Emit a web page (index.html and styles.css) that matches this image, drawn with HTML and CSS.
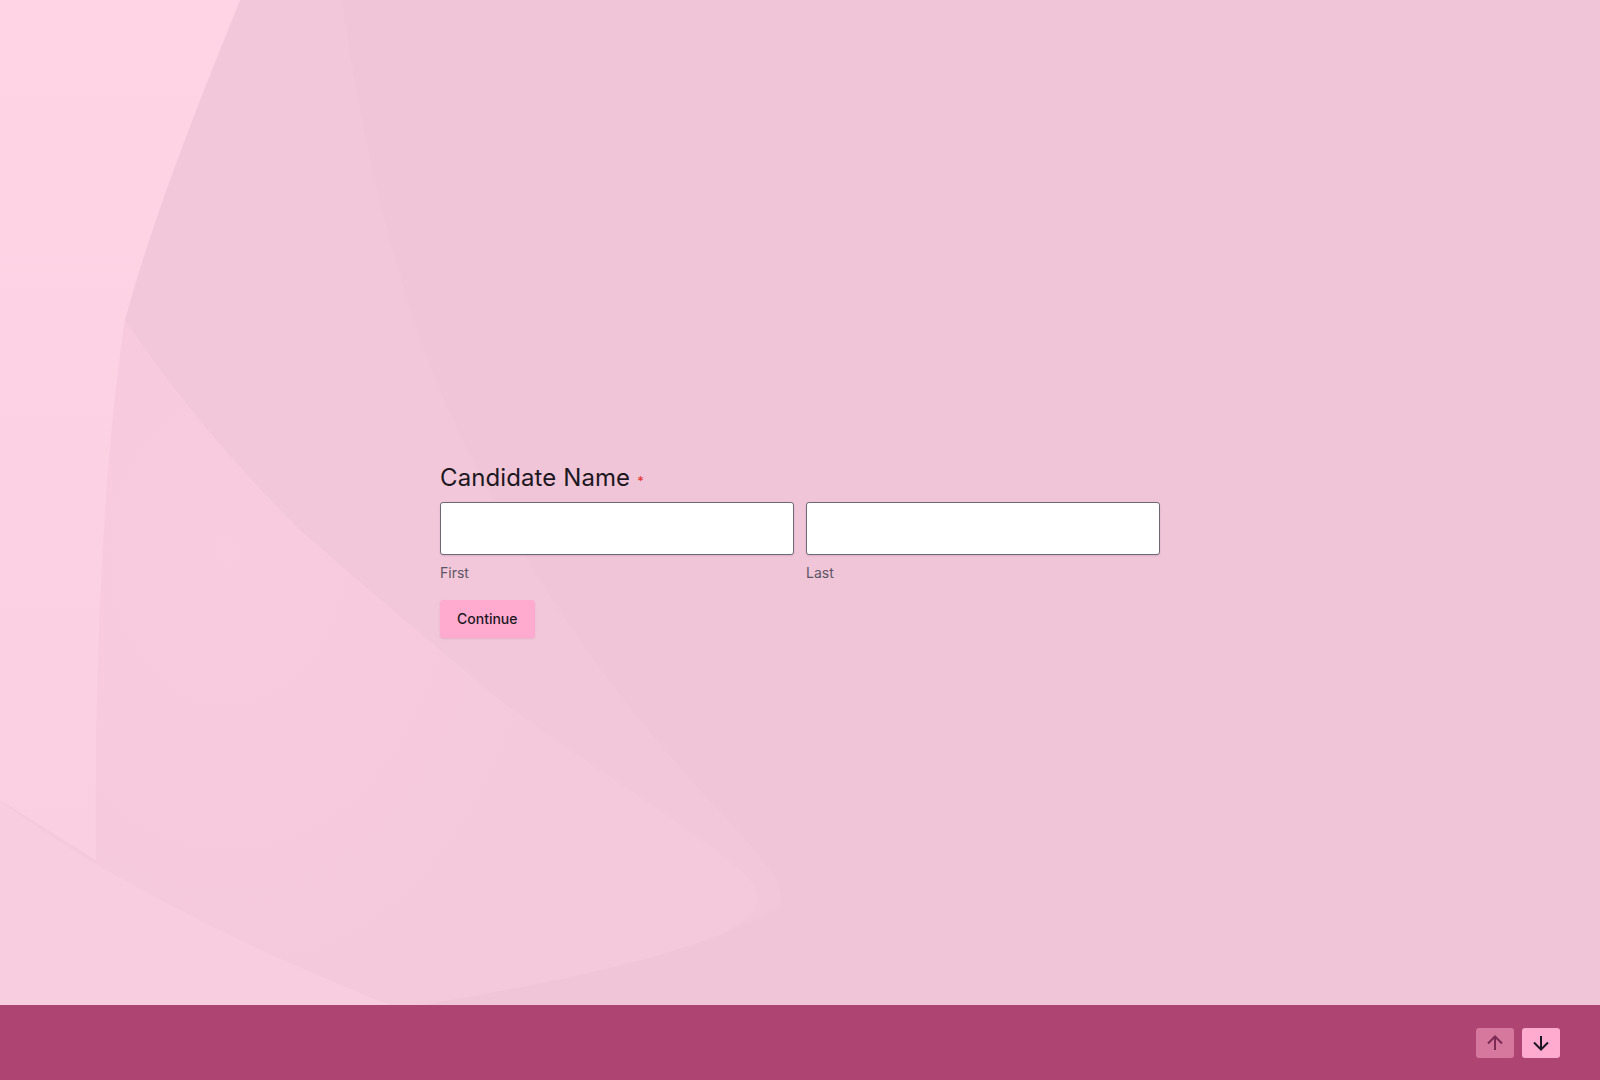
FILE: index.html
```html
<!DOCTYPE html>
<html lang="en">
<head>
<meta charset="utf-8">
<title>Candidate Name</title>
<link rel="stylesheet" href="styles.css">
</head>
<body>
<div class="page">
  <main class="stage">
    <svg class="backdrop" viewBox="0 0 1600 1005" preserveAspectRatio="none" aria-hidden="true">
      <defs>
        <linearGradient id="g3" x1="0" y1="0" x2="0" y2="1">
          <stop offset="0" stop-color="#ffd4e5"/>
          <stop offset="1" stop-color="#facfe1"/>
        </linearGradient>
        <radialGradient id="glow" cx="0.3" cy="0.55" r="0.45">
          <stop offset="0" stop-color="#fccde0" stop-opacity="0.6"/>
          <stop offset="1" stop-color="#fccde0" stop-opacity="0"/>
        </radialGradient>
      </defs>
      <path class="layer-a" d="M0 0 H342 C365 170 410 340 470 455 C520 560 600 680 700 790 C740 835 790 880 780 905 C720 945 580 975 420 1005 H0 Z"/>
      <path class="layer-b" d="M0 0 H240 C200 100 155 210 125 320 C180 400 230 460 300 530 C380 600 440 650 500 700 C580 760 680 820 740 870 C770 895 760 915 720 935 C640 965 540 985 420 1005 H0 Z"/>
      <path fill="url(#glow)" d="M0 0 H240 C200 100 155 210 125 320 C180 400 230 460 300 530 C380 600 440 650 500 700 C580 760 680 820 740 870 C770 895 760 915 720 935 C640 965 540 985 420 1005 H0 Z"/>
      <path fill="url(#g3)" d="M0 0 H240 C200 100 155 210 125 320 C105 450 94 650 96 860 L0 800 Z"/>
      <path class="layer-d" d="M0 800 C90 870 250 950 390 1005 H0 Z"/>
    </svg>
    <form class="form">
      <h1 class="title">Candidate Name<span class="req">*</span></h1>
      <div class="fields">
        <label class="field">
          <input class="input" type="text">
          <span class="sub">First</span>
        </label>
        <label class="field">
          <input class="input" type="text">
          <span class="sub">Last</span>
        </label>
      </div>
      <button class="btn" type="button">Continue</button>
    </form>
  </main>
  <footer class="footer">
    <button class="nav nav-up" type="button" aria-label="Previous">
      <svg viewBox="0 0 16 16" width="16" height="16"><path d="M8 15V1.5M1 8.5L8 1.5L15 8.5" fill="none" stroke="currentColor" stroke-width="2"/></svg>
    </button>
    <button class="nav nav-down" type="button" aria-label="Next">
      <svg viewBox="0 0 16 16" width="16" height="16"><path d="M8 1V14.5M1 7.5L8 14.5L15 7.5" fill="none" stroke="currentColor" stroke-width="2"/></svg>
    </button>
  </footer>
</div>
</body>
</html>
```

FILE: styles.css
```css
* { box-sizing: border-box; }
html, body { margin: 0; padding: 0; }
body {
  font-family: Inter, "Noto Sans", "Liberation Sans", sans-serif;
  background: #f1c5d8;
  color: #1d181f;
}
.page {
  display: flex;
  flex-direction: column;
  height: 100vh;
}
.stage {
  position: relative;
  flex: 1;
  overflow: hidden;
  background: #f1c5d8;
}
.backdrop {
  position: absolute;
  inset: 0;
  width: 100%;
  height: 100%;
  z-index: 0;
}
.layer-a { fill: #f3c7da; }
.layer-b { fill: #f5c9dc; }
.layer-d { fill: #f8cde0; }
.form {
  position: relative;
  z-index: 1;
  width: 720px;
  margin: 0 auto;
  padding-top: 462px;
}
.title {
  margin: 0 0 8px;
  font-size: 24px;
  line-height: 32px;
  font-weight: 400;
  color: #1d181f;
  letter-spacing: 0.1px;
}
.req {
  display: inline-block;
  margin-left: 7px;
  font-size: 13px;
  line-height: 13px;
  color: #e0302b;
  vertical-align: 0;
}
.fields {
  display: grid;
  grid-template-columns: 1fr 1fr;
  gap: 12px;
}
.field {
  display: flex;
  flex-direction: column;
}
.input {
  height: 53px;
  margin: 0;
  border: 1px solid #6d6874;
  border-radius: 3px;
  background: #fff;
  box-shadow: 0 1px 2px rgba(60, 20, 40, 0.12);
  font: inherit;
  padding: 0 12px;
}
.sub {
  margin-top: 8px;
  font-size: 14px;
  line-height: 20px;
  color: #5c5664;
}
.btn {
  margin-top: 17px;
  height: 38px;
  padding: 0 17px 2px;
  border: 0;
  border-radius: 3px;
  background: #ffabd0;
  box-shadow: 0 1px 2px rgba(120, 30, 70, 0.12);
  font-family: inherit;
  font-size: 14px;
  font-weight: 500;
  color: #1d181f;
}
.footer {
  flex: 0 0 75px;
  background: #ae4472;
  display: flex;
  justify-content: flex-end;
  align-items: center;
  gap: 8px;
  padding: 0 40px 0 0;
}
.nav {
  width: 38px;
  height: 30px;
  border: 0;
  border-radius: 3px;
  padding: 0;
  display: flex;
  align-items: center;
  justify-content: center;
}
.nav svg { display: block; }
.nav-up {
  background: #d6789e;
  color: #7c2b54;
}
.nav-down {
  background: #ffabd0;
  color: #1d181f;
}
```
